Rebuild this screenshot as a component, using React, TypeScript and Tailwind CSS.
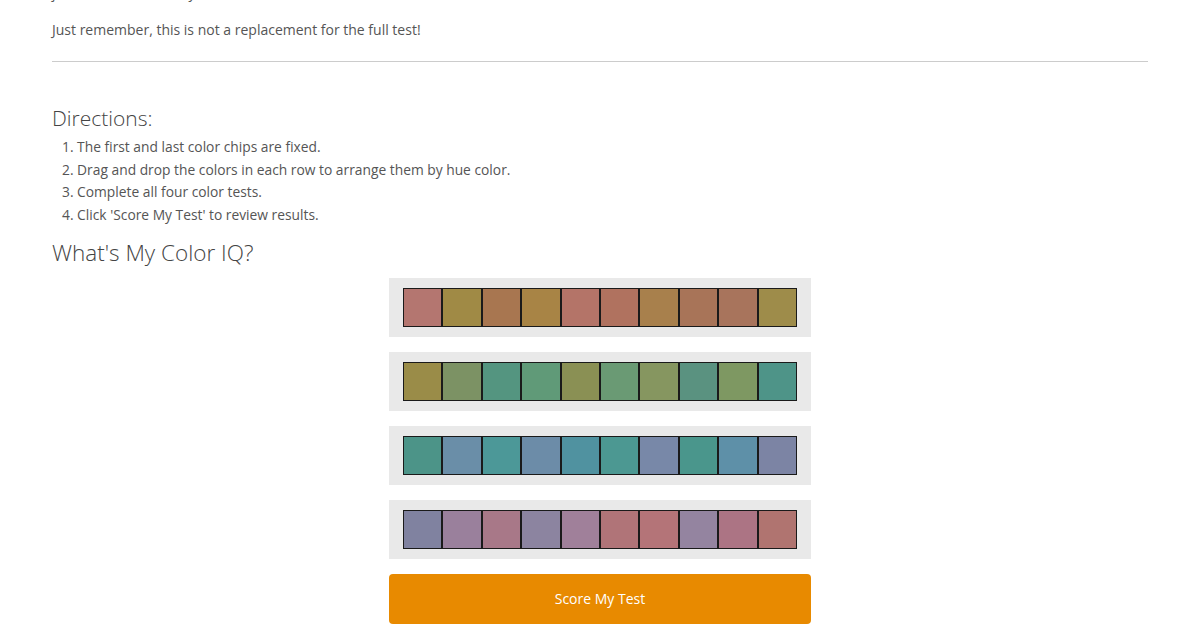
import React from "react";

const rows: string[][] = [
  ["#b47670", "#a08a45", "#a87650", "#a88445", "#b47468", "#b0725f", "#a8804c", "#a87458", "#a8745c", "#9e8c4a"],
  ["#9a8c48", "#7c9264", "#549580", "#609a78", "#8a9054", "#6a9a74", "#869660", "#5a9280", "#7e9862", "#4e9488"],
  ["#4c9488", "#6a8ea8", "#4c9898", "#6c8ca8", "#5092a0", "#4c9892", "#7888a8", "#4a968c", "#5e90a8", "#7c84a4"],
  ["#8082a0", "#9a809c", "#a87888", "#8c84a0", "#a0809a", "#b07478", "#b47478", "#9484a0", "#ac7484", "#b07470"],
];

export default function App() {
  return (
    <div
      className="w-[1200px] h-[630px] overflow-hidden bg-white text-[#555]"
      style={{ fontFamily: '"Open Sans", "Noto Sans", sans-serif' }}
    >
      <div className="mx-[52px]">
        <p className="text-[14px] leading-[20px] mt-[-17px]">
          just for fun, see how you do.
        </p>
        <p className="text-[14px] leading-[20px] mt-[17px]">
          Just remember, this is not a replacement for the full test!
        </p>
        <div className="mt-[21px] h-px bg-[#cccccc]" />
        <h2 className="mt-[41px] text-[21px] leading-[30px] font-light text-[#444]">Directions:</h2>
        <ol className="mt-[3px] ml-[10px] list-decimal list-inside text-[13.8px] leading-[22.7px]">
          <li>The first and last color chips are fixed.</li>
          <li>Drag and drop the colors in each row to arrange them by hue color.</li>
          <li>Complete all four color tests.</li>
          <li>Click 'Score My Test' to review results.</li>
        </ol>
        <h2 className="mt-[11px] text-[22.5px] leading-[30px] font-light text-[#444]">What's My Color IQ?</h2>
        <div className="mt-[10px] mx-auto w-[422px] flex flex-col gap-[15px]">
          {rows.map((row, i) => (
            <div key={i} className="bg-[#e9e9e9] h-[59px] px-[14px] flex items-center">
              <div className="flex w-full h-[39px]">
                {row.map((c, j) => (
                  <div
                    key={j}
                    className="flex-1 border border-[#1a1a1a]"
                    style={{ backgroundColor: c }}
                  />
                ))}
              </div>
            </div>
          ))}
          <button className="h-[50px] rounded-[4px] bg-[#e88a00] text-white text-[14px]">
            Score My Test
          </button>
        </div>
      </div>
    </div>
  );
}
